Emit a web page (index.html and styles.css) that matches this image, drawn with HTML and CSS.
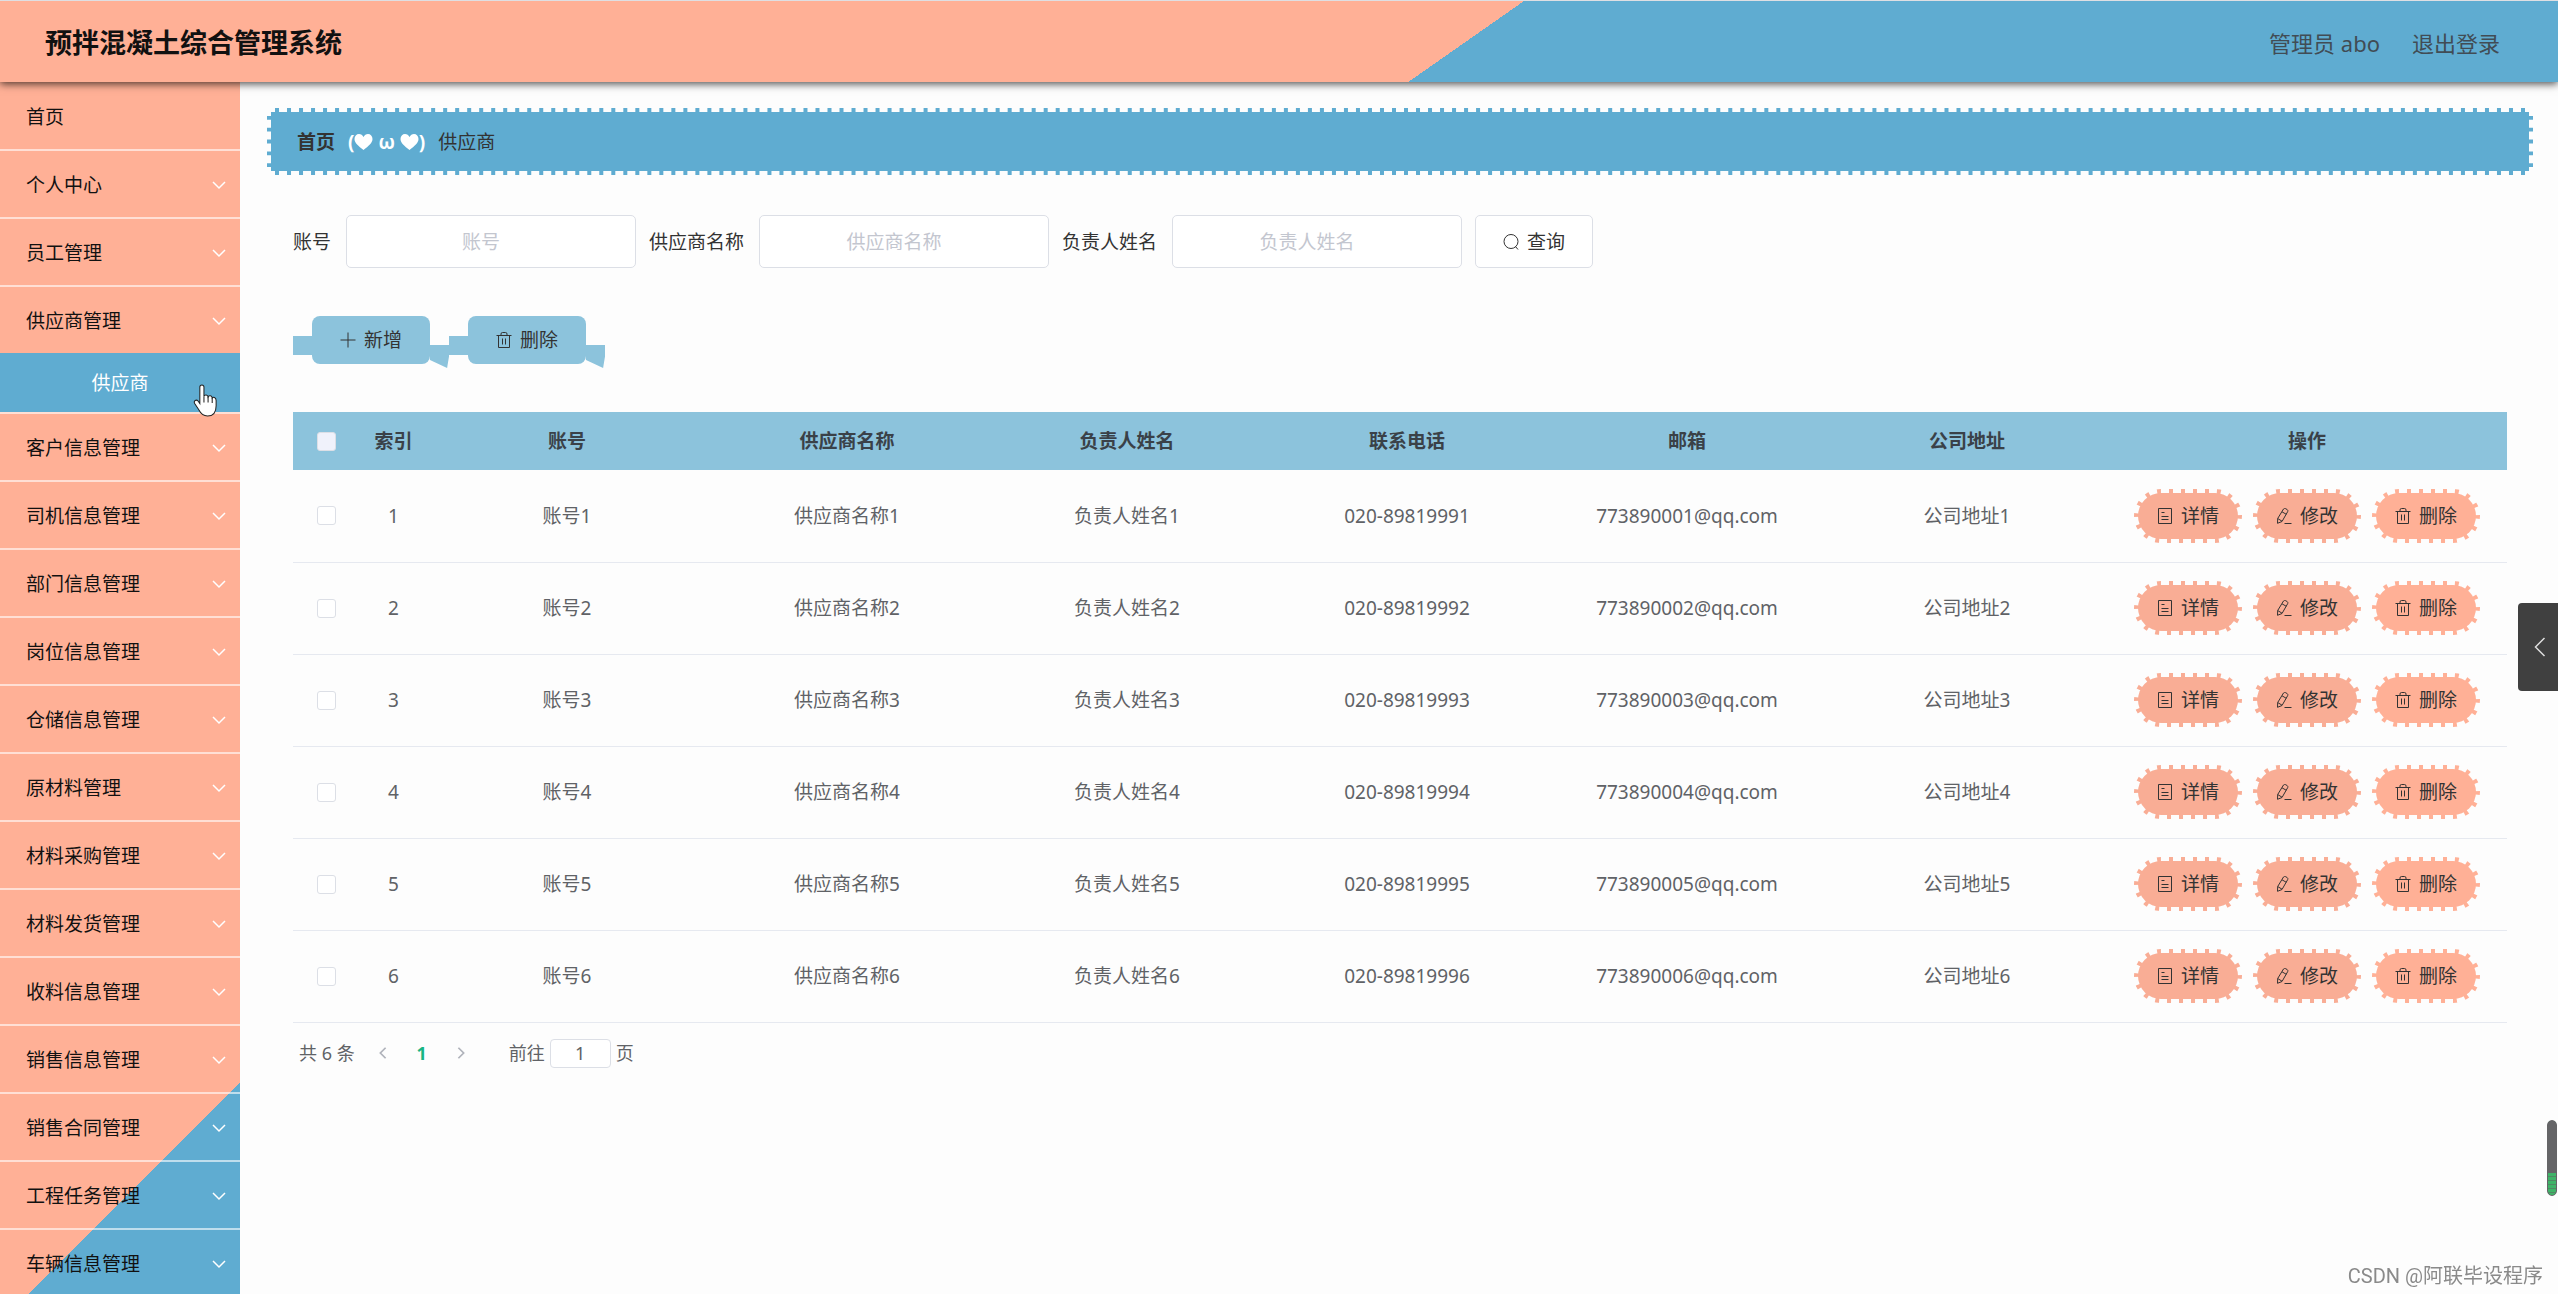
FILE: index.html
```html
<!DOCTYPE html>
<html lang="zh-CN">
<head>
    <meta charset="UTF-8">
    <meta name="viewport" content="width=device-width, initial-scale=1.0">
    <title>预拌混凝土综合管理系统</title>
    <link rel="stylesheet" href="styles.css">
</head>
<body>
    <svg class="sprite" aria-hidden="true">
        <symbol id="i-down" viewBox="0 0 16 16"><path d="M2 5l6 6 6-6"/></symbol>
        <symbol id="i-left" viewBox="0 0 16 16"><path d="M11 2L5 8l6 6"/></symbol>
        <symbol id="i-right" viewBox="0 0 16 16"><path d="M5 2l6 6-6 6"/></symbol>
        <symbol id="i-plus" viewBox="0 0 16 16"><path d="M8 .5v15M.5 8h15"/></symbol>
        <symbol id="i-search" viewBox="0 0 16 16"><circle cx="8" cy="7.5" r="7"/><path d="M12.500 12.500l2.500 3"/></symbol>
        <symbol id="i-trash" viewBox="0 0 16 16"><path d="M.5 3.500h15M5 3.500V2q0-1.500 1.500-1.500h3Q11 .5 11 2v1.500M2.500 3.500v12h11v-12M6.500 6.500v6M9.500 6.500v6"/></symbol>
        <symbol id="i-doc" viewBox="0 0 16 16"><path d="M1.500 .5h13v15h-13zM4.500 4.500h3M4.500 8.500h7M4.500 11.500h7"/></symbol>
        <symbol id="i-edit" viewBox="0 0 16 16"><path d="M7.500 1q1-1 2.200-.3l1.500.9q1 .7.500 2L6 13.500l-4.500 1.800.2-4.800zM6 3.800l4.300 2.500M1.700 10.500L6 13.200M8.500 15.500h7"/></symbol>
    </svg>

    <header class="header">
        <h1 class="title">预拌混凝土综合管理系统</h1>
        <div class="user">
            <span>管理员 abo</span>
            <a href="#">退出登录</a>
        </div>
    </header>

    <div class="layout">
        <aside class="sidebar">
            <ul class="menu" id="menu"></ul>
        </aside>

        <main class="main">
            <nav class="breadcrumb">
                <a href="#">首页</a>
                <span class="separator">(<svg class="heart" viewBox="0 0 18 16"><path d="M9 16C4 12 0 9 0 5c0-3 2-5 4.500-5C6.500 0 8 1 9 3c1-2 2.500-3 4.500-3C16 0 18 2 18 5c0 4-4 7-9 11z"/></svg> ω <svg class="heart" viewBox="0 0 18 16"><path d="M9 16C4 12 0 9 0 5c0-3 2-5 4.500-5C6.500 0 8 1 9 3c1-2 2.500-3 4.500-3C16 0 18 2 18 5c0 4-4 7-9 11z"/></svg>)</span>
                <span>供应商</span>
            </nav>

            <div class="content">
                <form class="search">
                    <label for="account">账号</label>
                    <input type="text" id="account" placeholder="账号">
                    <label for="supplier">供应商名称</label>
                    <input type="text" id="supplier" placeholder="供应商名称">
                    <label for="person">负责人姓名</label>
                    <input type="text" id="person" placeholder="负责人姓名">
                    <button type="button" class="search-btn"><svg class="icon"><use href="#i-search"/></svg>查询</button>
                </form>

                <div class="tools">
                    <button type="button" class="ribbon"><svg class="icon"><use href="#i-plus"/></svg>新增</button>
                    <button type="button" class="ribbon"><svg class="icon"><use href="#i-trash"/></svg>删除</button>
                </div>

                <table class="table">
                    <thead>
                        <tr>
                            <th class="col-check"><input type="checkbox" aria-label="全选"></th>
                            <th class="col-index">索引</th>
                            <th>账号</th>
                            <th>供应商名称</th>
                            <th>负责人姓名</th>
                            <th>联系电话</th>
                            <th>邮箱</th>
                            <th>公司地址</th>
                            <th class="col-action">操作</th>
                        </tr>
                    </thead>
                    <tbody id="rows"></tbody>
                </table>

                <div class="pagination">
                    <span class="total">共 6 条</span>
                    <button type="button" aria-label="上一页"><svg class="icon"><use href="#i-left"/></svg></button>
                    <span class="current">1</span>
                    <button type="button" aria-label="下一页"><svg class="icon"><use href="#i-right"/></svg></button>
                    <label for="page">前往</label>
                    <input type="text" id="page" value="1">
                    <span>页</span>
                </div>
            </div>
        </main>
    </div>

    <button type="button" class="drawer" aria-label="展开"><svg class="icon"><use href="#i-left"/></svg></button>
    <div class="meter"></div>
    <div class="watermark">CSDN @阿联毕设程序</div>
    <svg class="cursor" viewBox="0 0 24 32"><path d="M6.500 3q0-2 2-2t2 2v9q.5-1.500 2.200-1.300 1.500.2 1.800 1.800.7-1.300 2.300-1 1.400.3 1.700 2 .8-1 2.200-.5 1.600.6 1.600 3v5c0 6-2 10-8.300 10-4.500 0-6.500-2-8.500-6l-4-6q-1-2 .5-3t3 .7l1.500 2.300z"/><path d="M10.500 12v6M14.500 12.500v5.500M18.500 13.500v5"/></svg>

    <script>
        const menu = document.getElementById('menu');
        const rows = document.getElementById('rows');

        const menuItems = ['首页', '个人中心', '员工管理', '供应商管理', '客户信息管理', '司机信息管理',
            '部门信息管理', '岗位信息管理', '仓储信息管理', '原材料管理', '材料采购管理', '材料发货管理',
            '收料信息管理', '销售信息管理', '销售合同管理', '工程任务管理', '车辆信息管理'];

        menuItems.forEach((name, idx) => {
            const arrow = idx > 0 ? '<svg class="icon"><use href="#i-down"/></svg>' : '';
            const sub = name === '供应商管理' ? '<a class="submenu" href="#">供应商</a>' : '';
            menu.innerHTML += `<li><a class="menu-title" href="#">${name}${arrow}</a>${sub}</li>`;
        });

        for (let i = 1; i <= 6; i++) {
            rows.innerHTML += `
                <tr>
                    <td><input type="checkbox" aria-label="选择${i}"></td>
                    <td>${i}</td>
                    <td>账号${i}</td>
                    <td>供应商名称${i}</td>
                    <td>负责人姓名${i}</td>
                    <td>020-8981999${i}</td>
                    <td>77389000${i}@qq.com</td>
                    <td>公司地址${i}</td>
                    <td>
                        <div class="actions">
                            <button type="button" class="stamp"><svg class="icon"><use href="#i-doc"/></svg>详情</button>
                            <button type="button" class="stamp"><svg class="icon"><use href="#i-edit"/></svg>修改</button>
                            <button type="button" class="stamp stamp-delete"><svg class="icon"><use href="#i-trash"/></svg>删除</button>
                        </div>
                    </td>
                </tr>`;
        }
    </script>
</body>
</html>
```

FILE: styles.css
```css
* {
    box-sizing: border-box;
}
body {
    display: flex;
    flex-direction: column;
    height: 100vh;
    margin: 0;
    overflow: hidden;
    border-top: 1px solid #dfdfe3;
    background: #fdfdfd;
    font-family: 'Noto Sans', 'Noto Sans CJK SC', sans-serif;
    font-size: 19px;
    line-height: 28px;
    color: #333;
}
a {
    color: inherit;
    text-decoration: none;
}
button,
input {
    font: inherit;
    color: inherit;
}
button {
    padding: 0;
    border: none;
    background: none;
    cursor: pointer;
}
.sprite {
    display: none;
}
.icon {
    width: 16px;
    height: 16px;
    fill: none;
    stroke: currentColor;
}
.header {
    position: relative;
    z-index: 1;
    display: flex;
    flex: none;
    align-items: center;
    justify-content: space-between;
    height: 81px;
    padding: 2px 58px 0 45px;
    background: linear-gradient(145deg, #ffb096 57%, #5facd1 57%);
    box-shadow: 0 2px 8px rgba(0, 0, 0, 0.7);
}
.title {
    margin: 0;
    font-size: 27px;
    font-weight: bold;
    color: #111;
}
.user {
    display: flex;
    gap: 32px;
    font-size: 22px;
    color: #414c55;
}
.layout {
    display: flex;
    flex: 1;
    min-height: 0;
}
.sidebar {
    flex: none;
    width: 240px;
    padding-top: 1px;
    overflow: hidden;
    background: linear-gradient(135deg, #ffb096 877px, #5facd1 877px);
    color: #111;
}
.menu {
    margin: 0;
    padding: 0;
    list-style: none;
}
.menu li {
    border-bottom: 2px solid rgba(255, 255, 255, 0.6);
}
.menu-title {
    display: flex;
    align-items: center;
    justify-content: space-between;
    height: 66px;
    padding: 2px 13px 0 26px;
}
.menu-title .icon {
    color: #fff;
    stroke-width: 1.5;
}
.submenu {
    display: block;
    padding-top: 2px;
    background: #5facd1;
    color: #fff;
    line-height: 57px;
    text-align: center;
}
.main {
    flex: 1;
    min-width: 0;
    padding: 26px 25px 0 27px;
}
.breadcrumb {
    display: flex;
    align-items: center;
    gap: 13px;
    height: 67px;
    padding: 0 26px;
    border: 4px dashed #fdfdfd;
    background: #5facd1;
}
.breadcrumb a {
    font-weight: bold;
}
.separator {
    color: #fff;
    font-weight: bold;
}
.heart {
    width: 19px;
    height: 16px;
    fill: #fff;
    vertical-align: -1px;
}
.content {
    padding: 40px 26px 0;
}
.search {
    display: flex;
    align-items: center;
}
.search label {
    margin-right: 15px;
}
.search input {
    width: 290px;
    height: 53px;
    margin-right: 13px;
    padding: 0 40px 0 20px;
    border: 1px solid #dcdfe6;
    border-radius: 5px;
    background: #fff;
    text-align: center;
}
.search input::placeholder {
    color: #c3c6cf;
}
.search-btn {
    display: flex;
    align-items: center;
    justify-content: center;
    gap: 8px;
    width: 118px;
    height: 53px;
    border: 1px solid #dcdfe6;
    border-radius: 5px;
    background: #fff;
}
.tools {
    display: flex;
    margin: 48px 0;
}
.ribbon {
    position: relative;
    display: flex;
    align-items: center;
    justify-content: center;
    gap: 8px;
    width: 118px;
    height: 48px;
    margin: 0 19px;
    border-radius: 8px;
    background: #8cc3dc;
}
.ribbon::before,
.ribbon::after {
    content: '';
    position: absolute;
    width: 19px;
    background: #8cc3dc;
}
.ribbon::before {
    top: 20px;
    right: 100%;
    height: 19px;
}
.ribbon::after {
    top: 29px;
    left: 100%;
    height: 23px;
    clip-path: polygon(0 0, 100% 0, 100% 50%, 90% 100%, 0 65%);
}
.table {
    width: 100%;
    border-collapse: collapse;
    table-layout: fixed;
    text-align: center;
    color: #606266;
}
.table th {
    height: 58px;
    padding: 0;
    background: #8cc3dc;
    color: #3a4148;
}
.table td {
    height: 92px;
    padding: 0;
    border-bottom: 1px solid #e6e9f0;
}
.col-check,
.col-index {
    width: 67px;
}
.col-action {
    width: 400px;
}
.table input {
    display: block;
    width: 19px;
    height: 19px;
    margin: 0 auto;
    border: 1px solid #dcdfe6;
    border-radius: 3px;
    background: #fff;
    appearance: none;
}
.table th input {
    background: #f0f2fb;
}
.actions {
    display: flex;
    justify-content: center;
    gap: 11px;
}
.stamp {
    display: flex;
    align-items: center;
    justify-content: center;
    gap: 8px;
    width: 108px;
    height: 54px;
    border: 4px dashed #fdfdfd;
    border-radius: 27px;
    background: #f9ad95;
    color: #333;
}
.stamp-delete {
    background: #ffb096;
}
.pagination {
    display: flex;
    align-items: center;
    margin-top: 16px;
    padding-left: 6px;
    font-size: 18px;
    color: #606266;
}
.total {
    margin-right: 8px;
}
.pagination button {
    display: flex;
    align-items: center;
    justify-content: center;
    width: 40px;
    color: #b0b3bb;
}
.pagination .icon {
    width: 14px;
    height: 14px;
    stroke-width: 2;
}
.current {
    width: 38px;
    color: #18b584;
    font-weight: bold;
    text-align: center;
}
.pagination label {
    margin-left: 28px;
}
.pagination input {
    width: 61px;
    height: 29px;
    margin: 0 5px;
    padding: 0;
    border: 1px solid #dcdfe6;
    border-radius: 4px;
    background: #fff;
    text-align: center;
}
.drawer {
    position: fixed;
    top: 603px;
    right: 0;
    display: flex;
    align-items: center;
    justify-content: center;
    width: 40px;
    height: 88px;
    padding-left: 4px;
    border-radius: 4px 0 0 4px;
    background: #404040;
    color: #ddd;
}
.drawer .icon {
    width: 24px;
    height: 24px;
}
.meter {
    position: fixed;
    right: 1px;
    bottom: 98px;
    width: 10px;
    height: 76px;
    border: 1px solid #656567;
    border-radius: 5px;
    background: linear-gradient(#656567 52px, transparent 52px), repeating-linear-gradient(#3fb468 0 3px, #4f8a63 3px 4px);
}
.watermark {
    position: fixed;
    right: 15px;
    bottom: 4px;
    font-family: Roboto, 'Noto Sans CJK SC', sans-serif;
    font-size: 20px;
    color: #8a8a8a;
}
.cursor {
    position: fixed;
    top: 384px;
    left: 193px;
    width: 25px;
    height: 33px;
    fill: #fff;
    stroke: #222;
}
```
